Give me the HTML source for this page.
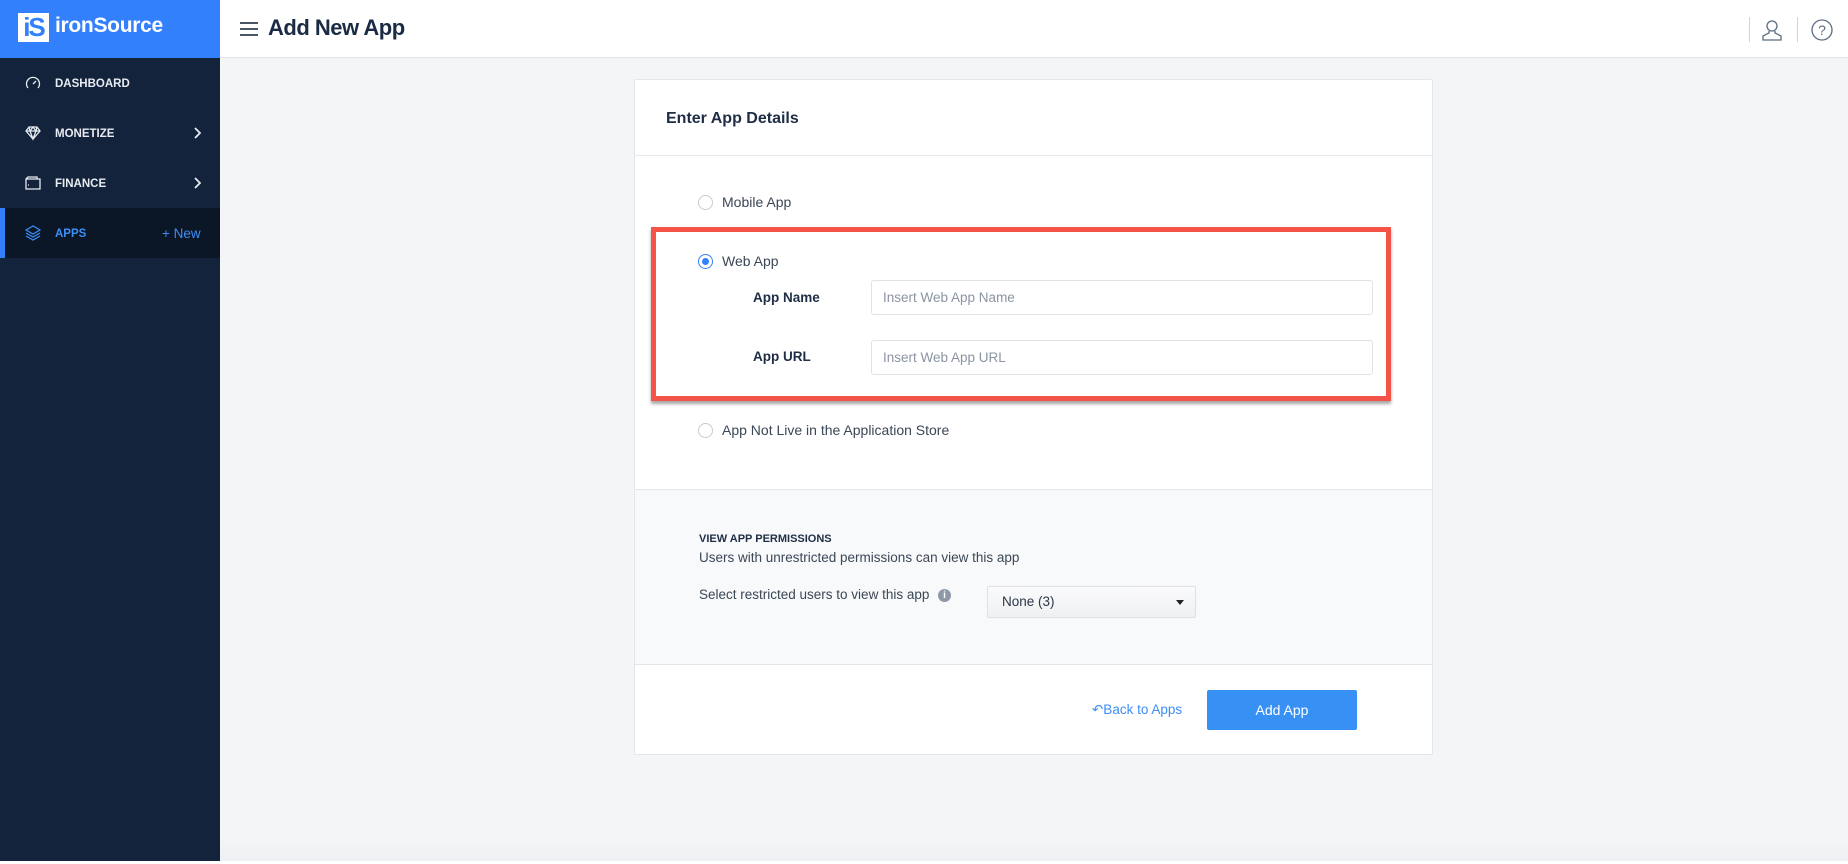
<!DOCTYPE html>
<html><head><meta charset="utf-8">
<style>
*{box-sizing:border-box;margin:0;padding:0}
body{width:1848px;height:864px;overflow:hidden;background:#f4f5f7;font-family:"Liberation Sans",sans-serif;position:relative}
.side{position:absolute;left:0;top:0;width:220px;height:861px;background:#12233b}
.logo{height:58px;background:#3380fc;position:relative}
.lbox{position:absolute;left:18px;top:13px;width:31px;height:29px;background:#fff;color:#3380fc;font-weight:bold;font-size:26px;line-height:29px;text-align:center;letter-spacing:-2px}
.ltxt{position:absolute;left:55px;top:14px;color:#fff;font-weight:bold;font-size:21px;letter-spacing:-0.3px}
.nav{position:absolute;left:0;width:220px;height:50px;color:#e8ecf2;font-size:11.5px;font-weight:bold;line-height:52px}
.nav span.t{position:absolute;left:55px}
.nav svg{position:absolute;left:25px;top:17px}
.nav svg.chev{position:absolute;left:193px;top:19px}
.top{position:absolute;left:220px;top:0;right:0;height:58px;background:#fff;border-bottom:1px solid #e2e5ea}
.card{position:absolute;left:634px;top:79px;width:799px;height:676px;background:#fff;border:1px solid #e3e6ea;border-radius:2px}
.lbl{position:absolute;font-size:14px;color:#3b4756}
.radio{position:absolute;width:15px;height:15px;border:1px solid #c5cbd3;border-radius:50%;background:#fff}
.inp{position:absolute;left:215px;width:502px;height:35px;border:1px solid #dfe2e6;border-radius:3px;font-size:13.5px;color:#8a94a1;padding-left:11px;line-height:33px}
</style></head><body>
<div class="side">
 <div class="logo"><div class="lbox">iS</div><div class="ltxt">ironSource</div></div>
 <div class="nav" style="top:58px"><svg width="16" height="16" viewBox="0 0 16 16" fill="none" stroke="#e8ecf2" stroke-width="1.3"><path d="M3 13A6.5 6.5 0 1 1 13 13"/><path d="M8 9l3-3"/></svg><span class="t">DASHBOARD</span></div>
 <div class="nav" style="top:108px"><svg width="16" height="16" viewBox="0 0 16 16" fill="none" stroke="#e8ecf2" stroke-width="1.3"><path d="M1 6l3-4h8l3 4-7 8z M1 6h14 M5 6l3 8 3-8 M4 2l1 4 3-4 3 4 1-4"/></svg><span class="t">MONETIZE</span><svg class="chev" width="8" height="12" viewBox="0 0 8 12" fill="none" stroke="#e8ecf2" stroke-width="1.8"><path d="M2 1l5 5-5 5"/></svg></div>
 <div class="nav" style="top:158px"><svg width="16" height="16" viewBox="0 0 16 16" fill="none" stroke="#e8ecf2" stroke-width="1.3"><path d="M1 4h14v10H1z M1 4l2-2h9v2 M3 10h1"/></svg><span class="t">FINANCE</span><svg class="chev" width="8" height="12" viewBox="0 0 8 12" fill="none" stroke="#e8ecf2" stroke-width="1.8"><path d="M2 1l5 5-5 5"/></svg></div>
 <div class="nav" style="top:208px;background:#0b1627;color:#3d8ef5;font-weight:normal"><div style="position:absolute;left:0;top:0;width:5px;height:50px;background:#3380fc"></div><svg width="16" height="16" viewBox="0 0 16 16" fill="none" stroke="#3d8ef5" stroke-width="1.2"><path d="M1 5l7-4 7 4-7 4z M1 8l7 4 7-4 M1 11l7 4 7-4"/></svg><span class="t" style="font-weight:bold">APPS</span><span style="position:absolute;left:162px;font-size:13.5px">+ New</span></div>
</div>
<div class="top">
 <svg style="position:absolute;left:20px;top:22px" width="18" height="14" viewBox="0 0 18 14" stroke="#4a5566" stroke-width="2"><path d="M0 1h18M0 7h18M0 13h18"/></svg>
 <div style="position:absolute;left:48px;top:15px;font-size:22px;font-weight:bold;color:#1a2b45;letter-spacing:-0.5px">Add New App</div>
 <div style="position:absolute;left:1529px;top:17px;width:1px;height:25px;background:#d0d5dc"></div>
 <div style="position:absolute;left:1577px;top:17px;width:1px;height:25px;background:#d0d5dc"></div>
 <svg style="position:absolute;left:1542px;top:19px" width="20" height="22" viewBox="0 0 20 22" fill="none" stroke="#5b6b80" stroke-width="1.3"><circle cx="10" cy="7" r="5"/><path d="M7 12v2l-6 3v4h18v-4l-6-3v-2"/></svg>
 <svg style="position:absolute;left:1591px;top:19px" width="22" height="22" viewBox="0 0 22 22" fill="none" stroke="#5b6b80" stroke-width="1.3"><circle cx="11" cy="11" r="10"/><text x="11" y="16" font-size="14" text-anchor="middle" fill="#5b6b80" stroke="none" font-family="Liberation Sans">?</text></svg>
</div>
<div style="position:absolute;left:220px;top:836px;right:0;height:25px;background:linear-gradient(#f4f5f7,#eef0f3)"></div>
<div style="position:absolute;left:0;top:861px;width:1848px;height:3px;background:#fff"></div>
<div class="card">
 <div style="position:absolute;left:31px;top:30px;font-size:16px;font-weight:bold;color:#1e2d44">Enter App Details</div>
 <div style="position:absolute;left:0;top:75px;width:797px;height:1px;background:#e5e8ec"></div>
 <div class="radio" style="left:63px;top:115px"></div><div class="lbl" style="left:87px;top:114px">Mobile App</div>
 <div style="position:absolute;left:16px;top:147px;width:740px;height:174px;border:5px solid #f45448;box-shadow:0 3px 3px rgba(0,0,0,0.35)">
  <div class="radio" style="left:42px;top:22px;border-color:#3380fc"><div style="position:absolute;left:3px;top:3px;width:7px;height:7px;border-radius:50%;background:#3380fc"></div></div>
  <div class="lbl" style="left:66px;top:21px">Web App</div>
  <div class="lbl" style="left:97px;top:58px;font-weight:bold;color:#1e2d44;font-size:13.5px">App Name</div>
  <div class="inp" style="top:48px">Insert Web App Name</div>
  <div class="lbl" style="left:97px;top:117px;font-weight:bold;color:#1e2d44;font-size:13.5px">App URL</div>
  <div class="inp" style="top:108px">Insert Web App URL</div>
 </div>
 <div class="radio" style="left:63px;top:343px"></div><div class="lbl" style="left:87px;top:342px">App Not Live in the Application Store</div>
 <div style="position:absolute;left:0;top:409px;width:797px;height:176px;background:#f8f9fb;border-top:1px solid #e3e6ea;border-bottom:1px solid #e3e6ea">
  <div style="position:absolute;left:64px;top:43px;font-size:11px;font-weight:bold;color:#1e2d44">VIEW APP PERMISSIONS</div>
  <div class="lbl" style="left:64px;top:60px;font-size:13.5px">Users with unrestricted permissions can view this app</div>
  <div class="lbl" style="left:64px;top:97px;font-size:13.5px">Select restricted users to view this app</div>
  <div style="position:absolute;left:303px;top:99px;width:13px;height:13px;border-radius:50%;background:#8e99a8;color:#fff;font-size:10px;font-weight:bold;text-align:center;line-height:13px">i</div>
  <div style="position:absolute;left:352px;top:96px;width:209px;height:32px;border:1px solid #dde1e6;border-radius:2px;background:linear-gradient(#fbfbfc,#eef0f2);font-size:13.5px;color:#2a3647;padding-left:14px;line-height:30px">None (3)<div style="position:absolute;right:11px;top:13px;border-left:4px solid transparent;border-right:4px solid transparent;border-top:5px solid #222"></div></div>
 </div>
 <div style="position:absolute;left:457px;top:622px;font-size:13.5px;color:#3d8ef5">&#8630;Back to Apps</div>
 <div style="position:absolute;left:572px;top:610px;width:150px;height:40px;background:#3791f5;border-radius:2px;color:#fff;font-size:14px;text-align:center;line-height:40px">Add App</div>
</div>
</body></html>
